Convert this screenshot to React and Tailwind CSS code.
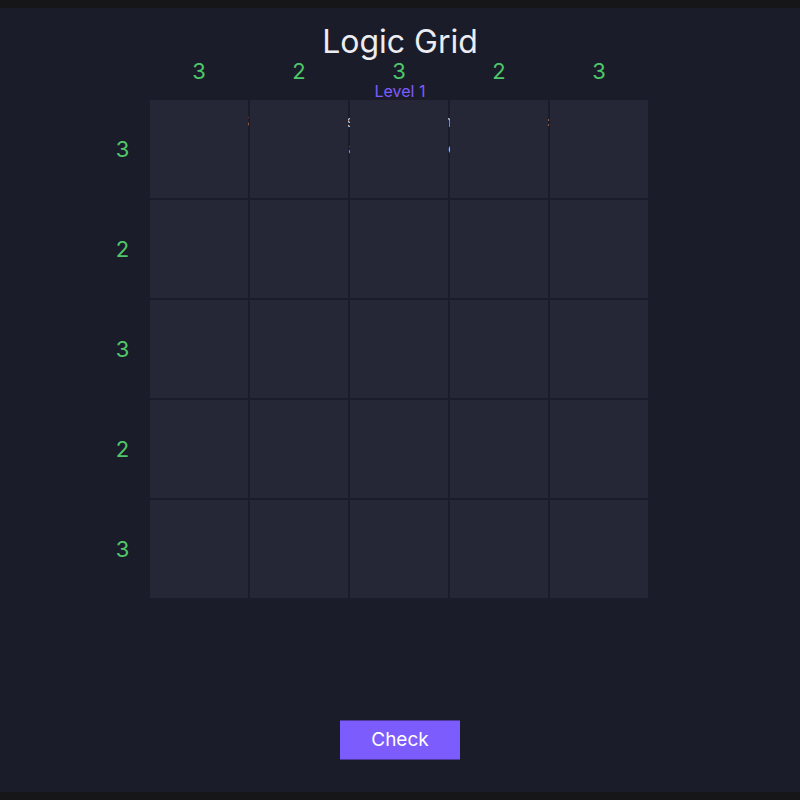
const COLS = [3, 2, 3, 2, 3];
const ROWS = [3, 2, 3, 2, 3];

export default function App() {
  return (
    <div
      className="h-screen w-full bg-[#1b1c29] border-y-8 border-[#161619] flex flex-col items-center text-[#ececf1]"
      style={{ fontFamily: 'Inter, "Noto Sans", sans-serif' }}
    >
      <h1 className="mt-[16px] text-[32px] leading-[36px] font-normal">Logic Grid</h1>

      {/* column clues */}
      <div className="flex">
        <div className="w-[55px]" />
        <div className="grid grid-cols-5 gap-[2px] w-[498px] text-[22px] leading-[22px] text-[#4fc76b] text-center">
          {COLS.map((n, i) => (
            <span key={i}>{n}</span>
          ))}
        </div>
        <div className="w-[57px]" />
      </div>

      <p className="text-[16px] leading-[18px] text-[#7c5cfc]">Level 1</p>

      {/* board */}
      <div className="flex">
        <div className="w-[55px] grid grid-rows-5 gap-[2px]">
          {ROWS.map((n, i) => (
            <span key={i} className="flex items-center justify-center text-[22px] text-[#4fc76b]">
              {n}
            </span>
          ))}
        </div>
        <div className="relative">
          <p className="absolute left-[84px] top-[8px] w-[330px] text-center text-[16px] leading-[27px] text-[#b8bac6]">
            Shade the cells so that each row and each column matches its clue number.
          </p>
          <div className="relative grid grid-cols-5 gap-[2px] w-[498px]">
            {Array.from({ length: 25 }).map((_, i) => (
              <button key={i} className="w-[98px] h-[98px] bg-[#252736]" />
            ))}
          </div>
        </div>
        <div className="w-[57px]" />
      </div>

      <button className="mt-[122px] w-[120px] h-[40px] bg-[#7c5cfc] border-y border-[#4d3c9e] text-white text-[19px]">
        Check
      </button>
    </div>
  );
}
